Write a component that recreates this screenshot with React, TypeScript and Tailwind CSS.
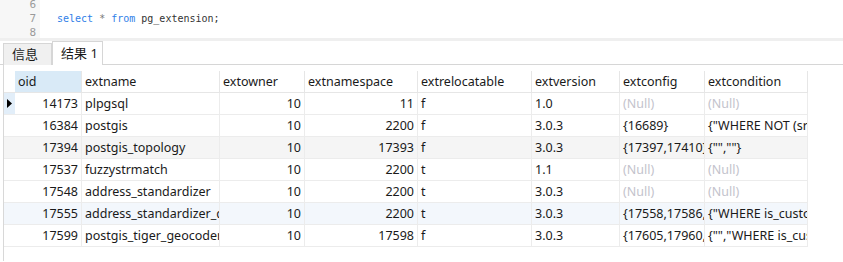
import React from 'react';

const cols = [
  { key: 'oid', right: true },
  { key: 'extname' },
  { key: 'extowner', right: true },
  { key: 'extnamespace', right: true },
  { key: 'extrelocatable' },
  { key: 'extversion' },
  { key: 'extconfig' },
  { key: 'extcondition' },
];

const rows: string[][] = [
  ['14173', 'plpgsql', '10', '11', 'f', '1.0', '(Null)', '(Null)'],
  ['16384', 'postgis', '10', '2200', 'f', '3.0.3', '{16689}', '{"WHERE NOT (srid BETWEEN 2000 AND 2217)"}'],
  ['17394', 'postgis_topology', '10', '17393', 'f', '3.0.3', '{17397,17410}', '{"",""}'],
  ['17537', 'fuzzystrmatch', '10', '2200', 't', '1.1', '(Null)', '(Null)'],
  ['17548', 'address_standardizer', '10', '2200', 't', '3.0.3', '(Null)', '(Null)'],
  ['17555', 'address_standardizer_data_us', '10', '2200', 't', '3.0.3', '{17558,17586,17575}', '{"WHERE is_custom=false"}'],
  ['17599', 'postgis_tiger_geocoder', '10', '17598', 'f', '3.0.3', '{17605,17960,17948}', '{"","WHERE is_custom=false"}'],
];

const rowBg = ['bg-white', 'bg-white', 'bg-[#f5f5f5]', 'bg-white', 'bg-white', 'bg-[#f3f7fc]', 'bg-white'];

const widthClass: Record<string, string> = {
  oid: 'w-[67px]',
  extname: 'w-[138px]',
  extowner: 'w-[85px]',
  extnamespace: 'w-[113px]',
  extrelocatable: 'w-[114px]',
  extversion: 'w-[88px]',
  extconfig: 'w-[85px]',
  extcondition: 'w-[103px]',
};

export default function App() {
  return (
    <div className="w-[843px] h-[262px] bg-white overflow-hidden text-[#1a1a1a] font-['Noto_Sans','Noto_Sans_CJK_SC',sans-serif]">
      {/* editor */}
      <div className="flex h-[38px] overflow-hidden">
        <div className="w-[40px] bg-[#f7f7f7] flex flex-col items-end pr-[4px] -mt-[2px] font-['DejaVu_Sans_Mono',monospace] text-[11px] leading-[14px] text-[#9a9a9a]">
          <span>6</span>
          <span>7</span>
          <span>8</span>
        </div>
        <div className="pl-[17px] pt-[12px] font-['DejaVu_Sans_Mono',monospace] text-[10px] leading-[14px] whitespace-pre">
          <span className="text-[#2f80e8]">select</span>
          <span className="text-[#777]"> * </span>
          <span className="text-[#2f80e8]">from</span>
          <span className="text-[#333]"> pg_extension;</span>
        </div>
      </div>
      <div className="h-[3px] bg-[#efefef]" />

      {/* tabs */}
      <div className="flex items-end h-[24px] border-b border-[#d6d6d6] pl-[3px]">
        <div className="w-[49px] h-[22px] bg-[#f0f0f0] border border-b-0 border-[#d6d6d6] text-[13px] leading-[20px] pl-[8px] -mb-px">
          信息
        </div>
        <div className="w-[51px] h-[24px] bg-white border border-b-0 border-[#d6d6d6] text-[13px] leading-[22px] pl-[8px] -mb-px">
          结果 1
        </div>
      </div>

      {/* grid */}
      <div className="flex h-[196px]">
        <div className="w-[4px] border-r border-[#d8d8d8]" />
        <div className="pt-[6px]">
          <div className="flex h-[22px] border-b border-[#e6e6e6] text-[12.5px] leading-[21px]">
            <div className="w-[11px]" />
            {cols.map((c) => (
              <div
                key={c.key}
                className={`${widthClass[c.key]} ${c.key === 'oid' ? 'bg-[#d9eaf7]' : ''} border-r border-[#e6e6e6] px-[3px] overflow-hidden whitespace-nowrap`}
              >
                {c.key}
              </div>
            ))}
          </div>
          {rows.map((r, i) => (
            <div key={i} className={`flex h-[22px] border-b border-[#ececec] text-[12.5px] leading-[21px] ${rowBg[i]}`}>
              <div className={`w-[11px] flex items-center justify-center ${i === 0 ? 'bg-[#e2eef9]' : ''}`}>
                {i === 0 && (
                  <svg width="5" height="9" viewBox="0 0 5 9">
                    <path d="M0 0 L5 4.5 L0 9 Z" fill="#000" />
                  </svg>
                )}
              </div>
              {cols.map((c, j) => {
                const v = r[j];
                const isNull = v === '(Null)';
                return (
                  <div
                    key={c.key}
                    className={`${widthClass[c.key]} border-r border-[#ececec] px-[3px] overflow-hidden whitespace-nowrap ${c.right ? 'text-right' : ''} ${isNull ? 'text-[#c3c3cc]' : ''}`}
                  >
                    {v}
                  </div>
                );
              })}
            </div>
          ))}
        </div>
      </div>
    </div>
  );
}
